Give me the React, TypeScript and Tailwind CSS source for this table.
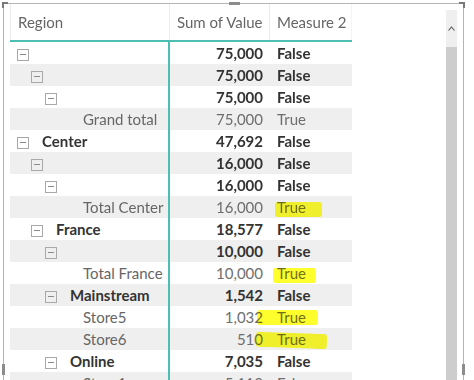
import React from 'react';

type Row = {
    level: number; // 0 = leaf
    label: string;
    value: string;
    measure: string;
    bold: boolean;
    mark?: string;
};

const rows: Row[] = [
    { level: 1, label: '', value: '75,000', measure: 'False', bold: true },
    { level: 2, label: '', value: '75,000', measure: 'False', bold: true },
    { level: 3, label: '', value: '75,000', measure: 'False', bold: true },
    { level: 0, label: 'Grand total', value: '75,000', measure: 'True', bold: false },
    { level: 1, label: 'Center', value: '47,692', measure: 'False', bold: true },
    { level: 2, label: '', value: '16,000', measure: 'False', bold: true },
    { level: 3, label: '', value: '16,000', measure: 'False', bold: true },
    { level: 0, label: 'Total Center', value: '16,000', measure: 'True', bold: false, mark: 'left-[265px] top-[6px] w-[47px] h-[15px]' },
    { level: 2, label: 'France', value: '18,577', measure: 'False', bold: true },
    { level: 3, label: '', value: '10,000', measure: 'False', bold: true },
    { level: 0, label: 'Total France', value: '10,000', measure: 'True', bold: false, mark: 'left-[263px] top-[6px] w-[43px] h-[15px]' },
    { level: 3, label: 'Mainstream', value: '1,542', measure: 'False', bold: true },
    { level: 0, label: 'Store5', value: '1,032', measure: 'True', bold: false, mark: 'left-[247px] top-[4px] w-[61px] h-[15px]' },
    { level: 0, label: 'Store6', value: '510', measure: 'True', bold: false, mark: 'left-[246px] top-[5px] w-[71px] h-[15px] rotate-[2deg]' },
    { level: 3, label: 'Online', value: '7,035', measure: 'False', bold: true },
    { level: 0, label: 'Store1', value: '5,113', measure: 'False', bold: false },
];

const indent: Record<number, string> = {
    1: 'pl-[7px]',
    2: 'pl-[21px]',
    3: 'pl-[35px]',
};

const Collapse = () => (
    <span className="w-[12px] h-[12px] mt-[3px] border border-[#a8a8a8] flex items-center justify-center shrink-0">
        <span className="w-[6px] h-px bg-[#8a8a8a]" />
    </span>
);

export default function App() {
    return (
        <div className="w-[474px] h-[380px] bg-white overflow-hidden" style={{ fontFamily: 'Lato, "Open Sans", sans-serif' }}>
            <div className="relative ml-[3px] mt-[3px] w-[461px] h-[377px] border-l border-t border-r border-[#b4b4b4] flex">
                {/* frame corners and handles */}
                <span className="absolute -left-[2px] -top-[2px] w-[6px] h-[6px] border-l-2 border-t-2 border-[#7a7a7a]" />
                <span className="absolute -right-[2px] -top-[2px] w-[6px] h-[6px] border-r-2 border-t-2 border-[#7a7a7a]" />
                <span className="absolute left-[225px] -top-[2px] w-[11px] h-[3px] bg-[#8c8c8c]" />
                <span className="absolute -left-[2px] top-[360px] w-[3px] h-[11px] bg-[#8c8c8c]" />
                <span className="absolute -right-[2px] top-[360px] w-[3px] h-[11px] bg-[#8c8c8c]" />

                <div className="pl-[6px] w-[348px] text-[15px]">
                    <div className="flex h-[36px] items-center text-[#666666]">
                        <div className="w-[160px] h-full flex items-center pl-[7px] border-l border-r border-[#ececec]">Region</div>
                        <div className="w-[100px] h-full flex items-center pl-[7px] border-r border-[#ececec]">Sum of Value</div>
                        <div className="w-[82px] h-full flex items-center pl-[7px] border-r border-[#f4f4f4]">Measure 2</div>
                    </div>
                    <div className="h-[2px] bg-[#4cbfb2]" />
                    {rows.map((r, i) => (
                        <div key={i} className={`relative flex h-[22px] ${i % 2 === 1 ? 'bg-[#efefef]' : 'bg-white'}`}>
                            <div className={`w-[160px] flex items-center border-r-2 border-[#4cbfb2] ${r.level ? indent[r.level] : 'pl-[73px]'}`}>
                                {r.level > 0 && <Collapse />}
                                {r.label && (
                                    <span className={r.level ? 'ml-[13px] font-bold text-[#333333]' : 'text-[#666666]'}>{r.label}</span>
                                )}
                            </div>
                            <div className={`w-[100px] flex items-center justify-end pr-[7px] ${r.bold ? 'font-bold text-[#333333]' : 'text-[#6e6e6e]'}`}>
                                {r.value}
                            </div>
                            <div className={`w-[82px] flex items-center pl-[7px] ${r.bold ? 'font-bold text-[#333333]' : 'text-[#6e6e6e]'}`}>
                                {r.measure}
                            </div>
                            {r.mark && <span className={`absolute ${r.mark} rounded-[3px] bg-[#ffff2e] mix-blend-multiply`} />}
                        </div>
                    ))}
                </div>

                <div className="ml-auto mr-[6px] mt-[6px] w-[11px] flex flex-col">
                    <div className="h-[37px] bg-[#efefef] flex items-center justify-center">
                        <svg width="7" height="5" viewBox="0 0 7 5">
                            <polyline points="0.5,4.5 3.5,1 6.5,4.5" fill="none" stroke="#555" strokeWidth="1.1" />
                        </svg>
                    </div>
                    <div className="flex-1 bg-[#cdcdcd]" />
                </div>
            </div>
        </div>
    );
}
